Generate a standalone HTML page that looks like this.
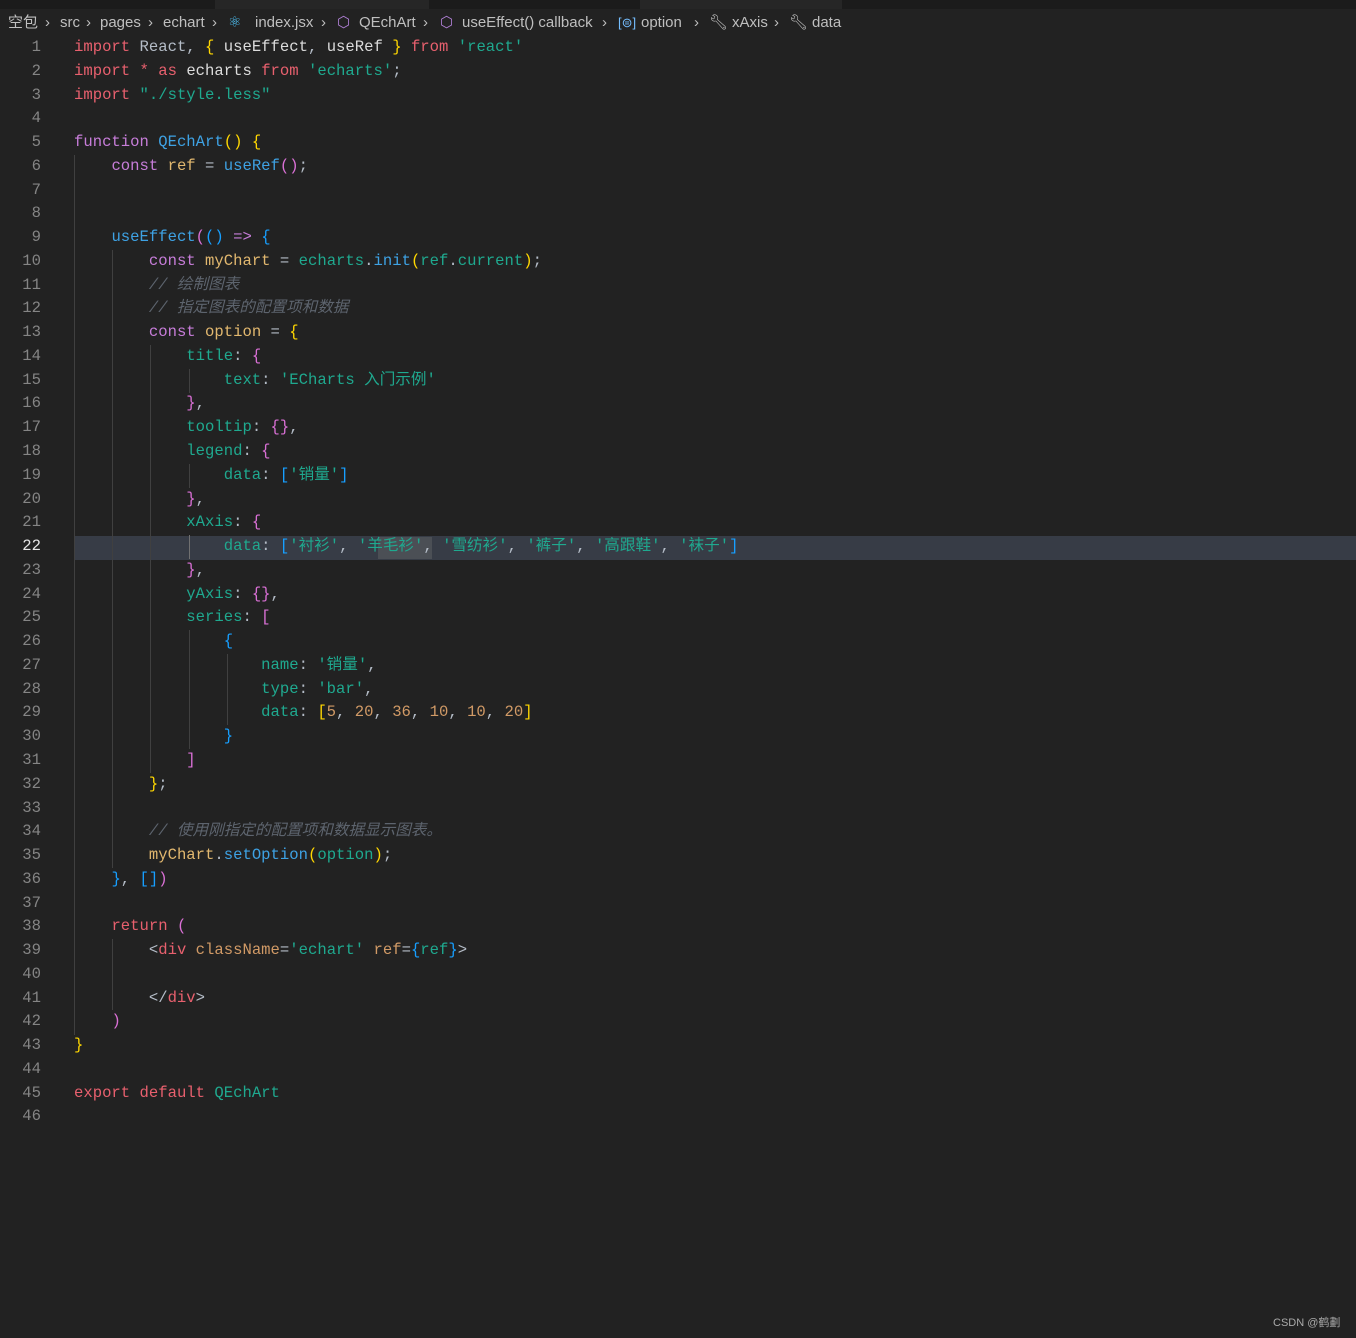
<!DOCTYPE html>
<html><head><meta charset="utf-8"><style>
body{margin:0;width:1356px;height:1338px;background:#222222;overflow:hidden;position:relative;font-family:"Liberation Mono","Noto Sans CJK SC",monospace;}
.top{position:absolute;left:0;top:0;width:1356px;height:9px;background:#1b1b1b}
.tab{position:absolute;top:0;height:9px;background:#262626}
.bc{position:absolute;left:0;top:10px;height:26px;width:1356px;font-family:"Liberation Sans","Noto Sans CJK SC",sans-serif;font-size:15px;color:#bfbfbf;line-height:26px;white-space:nowrap}
.bc span{position:absolute;top:0}
.ln{position:absolute;left:0;width:41px;text-align:right;font-size:15.6px;color:#858585}
.code{position:absolute;left:74px;font-size:15.6px;color:#b4bcc7}
.row{height:23.77px;line-height:23.77px;white-space:pre}
.g{position:absolute;width:1px;background:#404040}
.k{color:#e8606e}.p{color:#c77dd9}.v{color:#e2b86f}.f{color:#3ea2e4}.s{color:#1fa98f}.c{color:#5d646e;font-style:italic}.n{color:#d19a66}.y{color:#ffd700}.m{color:#da70d6}.b{color:#179fff}.t{color:#e8606e}.at{color:#d19a66}
</style></head><body>
<div class="top"></div><div class="tab" style="left:215px;width:214px"></div><div class="tab" style="left:640px;width:202px"></div>
<div class="bc">
<span style="left:8px">空包</span><span style="left:45px">›</span>
<span style="left:60px">src</span><span style="left:86px">›</span>
<span style="left:100px">pages</span><span style="left:148px">›</span>
<span style="left:163px">echart</span><span style="left:212px">›</span>
<span style="left:228px;color:#4fc3f7">⚛</span><span style="left:255px">index.jsx</span><span style="left:321px">›</span>
<span style="left:337px;color:#b180d7">⬡</span><span style="left:359px">QEchArt</span><span style="left:423px">›</span>
<span style="left:440px;color:#b180d7">⬡</span><span style="left:462px">useEffect() callback</span><span style="left:602px">›</span>
<span style="left:618px;color:#75beff;font-size:13px">[⊜]</span><span style="left:641px">option</span><span style="left:694px">›</span>
<span style="left:709px">🔧︎</span><span style="left:732px">xAxis</span><span style="left:774px">›</span>
<span style="left:789px">🔧︎</span><span style="left:812px">data</span>
</div>
<div style="position:absolute;left:74px;right:0;top:536px;height:24px;background:#373c46"></div>
<div style="position:absolute;left:378px;top:537px;width:54px;height:22px;background:#4b4f55"></div>
<div class="g" style="left:74px;top:155px;height:880px"></div>
<div class="g" style="left:112px;top:250px;height:618px"></div>
<div class="g" style="left:112px;top:939px;height:71px"></div>
<div class="g" style="left:150px;top:345px;height:428px"></div>
<div class="g" style="left:189px;top:369px;height:24px"></div>
<div class="g" style="left:189px;top:464px;height:24px"></div>
<div class="g" style="left:189px;top:535px;height:24px;background:#707070"></div>
<div class="g" style="left:189px;top:630px;height:119px"></div>
<div class="g" style="left:227px;top:654px;height:71px"></div>
<div class="ln" style="top:36px"><div class="row">1</div><div class="row">2</div><div class="row">3</div><div class="row">4</div><div class="row">5</div><div class="row">6</div><div class="row">7</div><div class="row">8</div><div class="row">9</div><div class="row">10</div><div class="row">11</div><div class="row">12</div><div class="row">13</div><div class="row">14</div><div class="row">15</div><div class="row">16</div><div class="row">17</div><div class="row">18</div><div class="row">19</div><div class="row">20</div><div class="row">21</div><div class="row" style="color:#e6e6e6">22</div><div class="row">23</div><div class="row">24</div><div class="row">25</div><div class="row">26</div><div class="row">27</div><div class="row">28</div><div class="row">29</div><div class="row">30</div><div class="row">31</div><div class="row">32</div><div class="row">33</div><div class="row">34</div><div class="row">35</div><div class="row">36</div><div class="row">37</div><div class="row">38</div><div class="row">39</div><div class="row">40</div><div class="row">41</div><div class="row">42</div><div class="row">43</div><div class="row">44</div><div class="row">45</div><div class="row">46</div></div>
<div class="code" style="top:36px">
<div class="row"><span class="k">import</span> React, <span class="y">{</span> <span style="color:#dcdcdc">useEffect</span>, <span style="color:#dcdcdc">useRef</span> <span class="y">}</span> <span class="k">from</span> <span class="s">'react'</span></div>
<div class="row"><span class="k">import</span> <span class="k">*</span> <span class="k">as</span> <span style="color:#dcdcdc">echarts</span> <span class="k">from</span> <span class="s">'echarts'</span>;</div>
<div class="row"><span class="k">import</span> <span class="s">"./style.less"</span></div>
<div class="row"> </div>
<div class="row"><span class="p">function</span> <span class="f">QEchArt</span><span class="y">()</span> <span class="y">{</span></div>
<div class="row">    <span class="p">const</span> <span class="v">ref</span> = <span class="f">useRef</span><span class="m">()</span>;</div>
<div class="row"> </div>
<div class="row"> </div>
<div class="row">    <span class="f">useEffect</span><span class="m">(</span><span class="b">()</span> <span class="p">=&gt;</span> <span class="b">{</span></div>
<div class="row">        <span class="p">const</span> <span class="v">myChart</span> = <span class="s">echarts</span>.<span class="f">init</span><span class="y">(</span><span class="s">ref</span>.<span class="s">current</span><span class="y">)</span>;</div>
<div class="row"><span class="c">        // 绘制图表</span></div>
<div class="row"><span class="c">        // 指定图表的配置项和数据</span></div>
<div class="row">        <span class="p">const</span> <span class="v">option</span> = <span class="y">{</span></div>
<div class="row">            <span class="s">title</span>: <span class="m">{</span></div>
<div class="row">                <span class="s">text</span>: <span class="s">'ECharts 入门示例'</span></div>
<div class="row">            <span class="m">}</span>,</div>
<div class="row">            <span class="s">tooltip</span>: <span class="m">{}</span>,</div>
<div class="row">            <span class="s">legend</span>: <span class="m">{</span></div>
<div class="row">                <span class="s">data</span>: <span class="b">[</span><span class="s">'销量'</span><span class="b">]</span></div>
<div class="row">            <span class="m">}</span>,</div>
<div class="row">            <span class="s">xAxis</span>: <span class="m">{</span></div>
<div class="row">                <span class="s">data</span>: <span class="b">[</span><span class="s">'衬衫'</span>, <span class="s">'羊毛衫'</span>, <span class="s">'雪纺衫'</span>, <span class="s">'裤子'</span>, <span class="s">'高跟鞋'</span>, <span class="s">'袜子'</span><span class="b">]</span></div>
<div class="row">            <span class="m">}</span>,</div>
<div class="row">            <span class="s">yAxis</span>: <span class="m">{}</span>,</div>
<div class="row">            <span class="s">series</span>: <span class="m">[</span></div>
<div class="row">                <span class="b">{</span></div>
<div class="row">                    <span class="s">name</span>: <span class="s">'销量'</span>,</div>
<div class="row">                    <span class="s">type</span>: <span class="s">'bar'</span>,</div>
<div class="row">                    <span class="s">data</span>: <span class="y">[</span><span class="n">5</span>, <span class="n">20</span>, <span class="n">36</span>, <span class="n">10</span>, <span class="n">10</span>, <span class="n">20</span><span class="y">]</span></div>
<div class="row">                <span class="b">}</span></div>
<div class="row">            <span class="m">]</span></div>
<div class="row">        <span class="y">}</span>;</div>
<div class="row"> </div>
<div class="row"><span class="c">        // 使用刚指定的配置项和数据显示图表。</span></div>
<div class="row">        <span class="v">myChart</span>.<span class="f">setOption</span><span class="y">(</span><span class="s">option</span><span class="y">)</span>;</div>
<div class="row">    <span class="b">}</span>, <span class="b">[]</span><span class="m">)</span></div>
<div class="row"> </div>
<div class="row">    <span class="k">return</span> <span class="m">(</span></div>
<div class="row">        &lt;<span class="t">div</span> <span class="at">className</span>=<span class="s">'echart'</span> <span class="at">ref</span>=<span class="b">{</span><span class="s">ref</span><span class="b">}</span>&gt;</div>
<div class="row"> </div>
<div class="row">        &lt;/<span class="t">div</span>&gt;</div>
<div class="row">    <span class="m">)</span></div>
<div class="row"><span class="y">}</span></div>
<div class="row"> </div>
<div class="row"><span class="k">export</span> <span class="k">default</span> <span class="s">QEchArt</span></div>
<div class="row"> </div>
</div>
<div style="position:absolute;left:1273px;top:1314px;font-family:'Liberation Sans','Noto Sans CJK SC',sans-serif;font-size:11px;color:#aaaaaa">CSDN @鹤劃</div>
</body></html>
